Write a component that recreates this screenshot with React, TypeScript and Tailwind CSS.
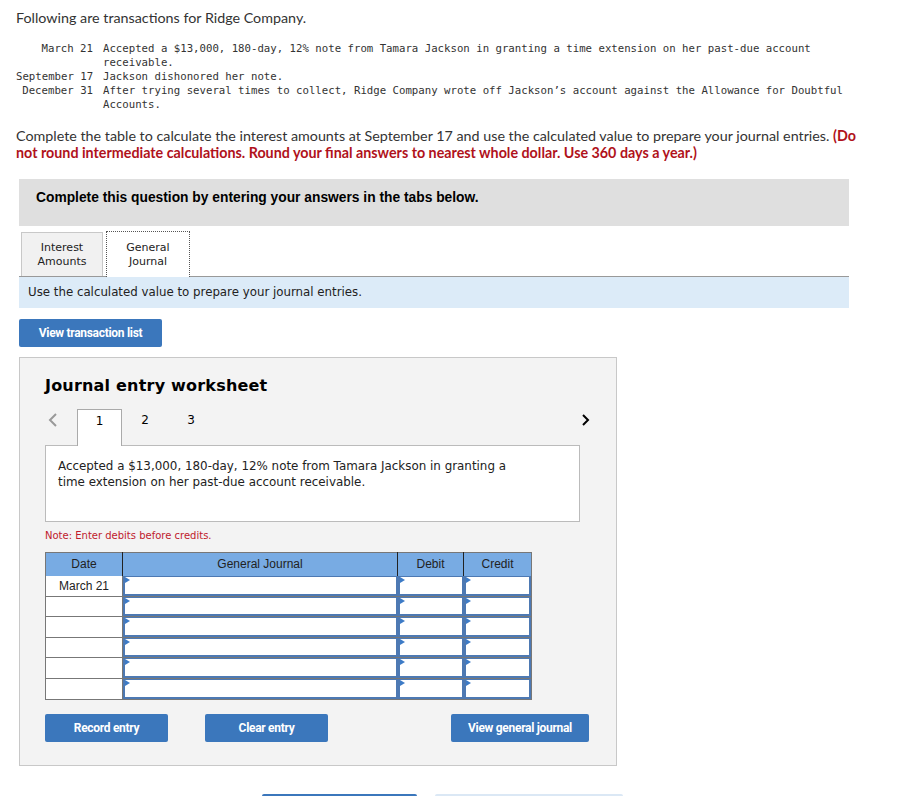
import React from 'react';

const TRANSACTIONS = [
  {
    date: 'March 21',
    text: 'Accepted a $13,000, 180-day, 12% note from Tamara Jackson in granting a time extension on her past-due account receivable.',
  },
  { date: 'September 17', text: 'Jackson dishonored her note.' },
  {
    date: 'December 31',
    text: 'After trying several times to collect, Ridge Company wrote off Jackson\u2019s account against the Allowance for Doubtful Accounts.',
  },
];

const ROWS = ['March 21', '', '', '', '', ''];

const sans = { fontFamily: '"Lato", "Open Sans", sans-serif' };

const InputCell = () => (
  <td className="p-0 border-b border-[#777] h-[20.6px]">
    <div className="relative h-full border-x-2 border-b-2 border-t border-[#4d79b3] bg-white">
      <span className="absolute left-0 top-0 w-0 h-0 border-y-[3px] border-l-[5px] border-y-transparent border-l-[#3d7bc6]" />
    </div>
  </td>
);

const BlueButton: React.FC<{ label: string; className?: string }> = ({ label, className = '' }) => (
  <button
    className={`h-7 rounded-[2px] bg-[#3b77bc] text-white text-[12px] font-bold tracking-[-0.3px] ${className}`}
    style={{ fontFamily: 'Roboto, "Liberation Sans", sans-serif' }}
  >
    {label}
  </button>
);

export default function App() {
  return (
    <div className="w-[913px] h-[796px] overflow-hidden bg-white text-[#333]">
      <div className="pl-4 pt-[9px]">
        <p className="text-[14.3px] leading-[18px]" style={sans}>
          Following are transactions for Ridge Company.
        </p>

        <div
          className="mt-[15px] grid grid-cols-[77px_745px] gap-x-[10px] text-[10.7px] leading-[14px] text-[#333]"
          style={{ fontFamily: '"DejaVu Sans Mono", "Liberation Mono", monospace' }}
        >
          {TRANSACTIONS.map((t) => (
            <React.Fragment key={t.date}>
              <span className="text-right whitespace-nowrap">{t.date}</span>
              <span>{t.text}</span>
            </React.Fragment>
          ))}
        </div>

        <p className="mt-[15px] w-[850px] text-[14.3px] leading-[17px]" style={sans}>
          Complete the table to calculate the interest amounts at September 17 and use the calculated value to prepare
          your journal entries.{' '}
          <b className="text-[#b0121b]">
            (Do not round intermediate calculations. Round your final answers to nearest whole dollar. Use 360 days a
            year.)
          </b>
        </p>
      </div>

      <div className="ml-[19px] w-[830px]" style={{ fontFamily: '"DejaVu Sans", Verdana, sans-serif' }}>
        <div className="mt-[18px] h-[47px] bg-[#dfdfdf] pl-[17px] pt-[11px]">
          <p
            className="text-[13.8px] leading-[16px] font-bold text-black"
            style={{ fontFamily: '"Liberation Sans", Arial, sans-serif' }}
          >
            Complete this question by entering your answers in the tabs below.
          </p>
        </div>

        <div className="mt-[5px] flex items-end border-b border-[#999] h-[46px] pl-[2px] gap-[3px]">
          <div className="w-[82px] h-[44px] bg-[#f1f1f1] border border-b-0 border-[#c8c8c8] flex items-center justify-center text-center text-[11px] leading-[14px] text-[#222]">
            Interest
            <br />
            Amounts
          </div>
          <div className="w-[84px] h-[46px] -mb-px bg-white border border-dotted border-b-0 border-[#555] flex items-center justify-center text-center text-[11px] leading-[14px] text-[#222]">
            General
            <br />
            Journal
          </div>
        </div>

        <div className="h-[31px] bg-[#dcebf8] pl-[9px] flex items-center text-[11.8px] text-[#222]">
          Use the calculated value to prepare your journal entries.
        </div>

        <BlueButton label="View transaction list" className="mt-[11px] w-[143px]" />

        <div className="mt-[10px] w-[598px] h-[409px] bg-[#f3f3f3] border border-[#c8c8c8] pl-[25px] pt-[18px]">
          <h2 className="text-[16px] leading-[20px] font-bold text-black tracking-[0.2px]">Journal entry worksheet</h2>

          <div className="mt-[12px] w-[545px] flex items-end h-[37px] text-[12px] leading-[16px] text-black">
            <span className="w-8 h-full pt-[4px] pl-[3px] text-[#999]">
              <svg width="10" height="16" viewBox="0 0 10 16" fill="none" stroke="currentColor" strokeWidth="2">
                <path d="M8 2 L2 8 L8 14" />
              </svg>
            </span>
            <div className="w-[45px] h-[37px] -mb-px bg-white border border-b-0 border-[#aaa] pt-[3px] text-center">
              1
            </div>
            <div className="w-[46px] h-full pt-[4px] text-center">2</div>
            <div className="w-[46px] h-full pt-[4px] text-center">3</div>
            <span className="ml-auto h-full pt-[5px]">
              <svg width="9" height="14" viewBox="0 0 9 14" fill="none" stroke="currentColor" strokeWidth="2">
                <path d="M2 2 L7 7 L2 12" />
              </svg>
            </span>
          </div>

          <div className="w-[535px] h-[77px] bg-white border border-[#bbb] pl-3 pt-3">
            <p className="w-[460px] text-[11.9px] leading-[16px] text-[#222]">
              Accepted a $13,000, 180-day, 12% note from Tamara Jackson in granting a time extension on her past-due
              account receivable.
            </p>
          </div>

          <p className="mt-[7px] text-[10px] leading-[14px] text-[#c01a2c]">Note: Enter debits before credits.</p>

          <table
            className="mt-[9px] w-[487px] border-collapse border border-[#777] table-fixed text-[12px] text-[#222]"
            style={{ fontFamily: '"Liberation Sans", Arial, sans-serif' }}
          >
            <colgroup>
              <col className="w-[77px]" />
              <col className="w-[275px]" />
              <col className="w-[66px]" />
              <col className="w-[68px]" />
            </colgroup>
            <thead>
              <tr className="h-[23px] bg-[#78abe3]">
                <th className="font-normal border-r border-[#222]">Date</th>
                <th className="font-normal border-r border-[#222]">General Journal</th>
                <th className="font-normal border-r border-[#222]">Debit</th>
                <th className="font-normal">Credit</th>
              </tr>
            </thead>
            <tbody>
              {ROWS.map((d, i) => (
                <tr key={i} className="h-[20.6px]">
                  <td className="p-0 bg-white border-b border-r border-[#777] text-center">{d}</td>
                  <InputCell />
                  <InputCell />
                  <InputCell />
                </tr>
              ))}
            </tbody>
          </table>

          <div className="mt-[14px] flex">
            <BlueButton label="Record entry" className="w-[123px]" />
            <BlueButton label="Clear entry" className="ml-[37px] w-[123px]" />
            <BlueButton label="View general journal" className="ml-[123px] w-[138px]" />
          </div>
        </div>

        <div className="mt-[28px] flex">
          <div className="ml-[243px] w-[155px] h-7 rounded-[2px] bg-[#3b77bc]" />
          <div className="ml-[18px] w-[188px] h-7 rounded-[2px] bg-[#dbe8f5]" />
        </div>
      </div>
    </div>
  );
}
